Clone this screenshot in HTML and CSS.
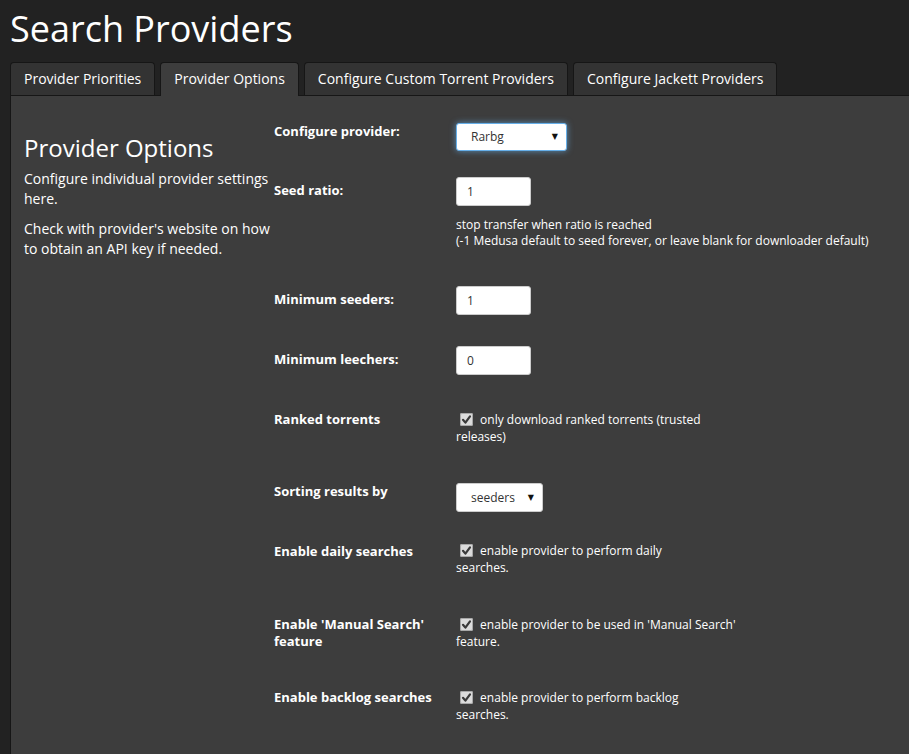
FILE: index.html
```html
<!DOCTYPE html>
<html>
<head>
<meta charset="utf-8">
<title>Search Providers</title>
<link rel="stylesheet" href="styles.css">
</head>
<body>
<div class="page">
  <h1 class="title">Search Providers</h1>
  <ul class="tabs">
    <li class="tab">Provider Priorities</li>
    <li class="tab active">Provider Options</li>
    <li class="tab">Configure Custom Torrent Providers</li>
    <li class="tab">Configure Jackett Providers</li>
  </ul>
  <div class="panel">
    <div class="group-desc">
      <h3>Provider Options</h3>
      <p>Configure individual provider settings here.</p>
      <p>Check with provider's website on how to obtain an API key if needed.</p>
    </div>
    <div class="group-list">
      <div class="field row-provider">
        <span class="label">Configure provider:</span>
        <div class="desc">
          <span class="select focus wide"><span class="select-text">Rarbg</span></span>
        </div>
      </div>
      <div class="field row-seed">
        <span class="label pad">Seed ratio:</span>
        <div class="desc">
          <span class="input">1</span>
          <div class="help">
            <span class="help-line">stop transfer when ratio is reached</span>
            <span class="help-line">(-1 Medusa default to seed forever, or leave blank for downloader default)</span>
          </div>
        </div>
      </div>
      <div class="field row-seeders">
        <span class="label pad">Minimum seeders:</span>
        <div class="desc"><span class="input">1</span></div>
      </div>
      <div class="field row-leechers">
        <span class="label pad">Minimum leechers:</span>
        <div class="desc"><span class="input">0</span></div>
      </div>
      <div class="field row-ranked">
        <span class="label">Ranked torrents</span>
        <div class="desc check-desc">
          <span class="checkbox"><svg viewBox="0 0 13 13" width="13" height="13"><path d="M3 6.8 L5.4 9.6 L10 3.4" fill="none" stroke="#3a3a3a" stroke-width="2.2" stroke-linecap="round" stroke-linejoin="round"/></svg></span>
          only download ranked torrents (trusted<br>releases)
        </div>
      </div>
      <div class="field row-sort">
        <span class="label">Sorting results by</span>
        <div class="desc">
          <span class="select narrow"><span class="select-text">seeders</span></span>
        </div>
      </div>
      <div class="field row-daily">
        <span class="label">Enable daily searches</span>
        <div class="desc check-desc">
          <span class="checkbox"><svg viewBox="0 0 13 13" width="13" height="13"><path d="M3 6.8 L5.4 9.6 L10 3.4" fill="none" stroke="#3a3a3a" stroke-width="2.2" stroke-linecap="round" stroke-linejoin="round"/></svg></span>
          enable provider to perform daily<br>searches.
        </div>
      </div>
      <div class="field row-manual">
        <span class="label">Enable 'Manual Search'<br>feature</span>
        <div class="desc check-desc">
          <span class="checkbox"><svg viewBox="0 0 13 13" width="13" height="13"><path d="M3 6.8 L5.4 9.6 L10 3.4" fill="none" stroke="#3a3a3a" stroke-width="2.2" stroke-linecap="round" stroke-linejoin="round"/></svg></span>
          enable provider to be used in 'Manual Search'<br>feature.
        </div>
      </div>
      <div class="field row-backlog">
        <span class="label">Enable backlog searches</span>
        <div class="desc check-desc">
          <span class="checkbox"><svg viewBox="0 0 13 13" width="13" height="13"><path d="M3 6.8 L5.4 9.6 L10 3.4" fill="none" stroke="#3a3a3a" stroke-width="2.2" stroke-linecap="round" stroke-linejoin="round"/></svg></span>
          enable provider to perform backlog<br>searches.
        </div>
      </div>
    </div>
  </div>
</div>
</body>
</html>
```

FILE: styles.css
```css
html, body {
  margin: 0;
  padding: 0;
  background: #222222;
  height: 100%;
  overflow: hidden;
}

body {
  font-family: "Open Sans", "DejaVu Sans", sans-serif;
  color: #ffffff;
}

.page {
  padding-left: 10px;
}

.title {
  margin: 0;
  padding-top: 8px;
  font-size: 36px;
  font-weight: 400;
  line-height: 42px;
  height: 54px;
  color: #ffffff;
}

.tabs {
  list-style: none;
  margin: 0;
  padding: 0;
  display: flex;
  gap: 5px;
  position: relative;
  z-index: 1;
}

.tab {
  height: 32px;
  line-height: 32px;
  padding: 0 13px;
  font-size: 14px;
  color: #ffffff;
  background: #333333;
  border: 1px solid #161616;
  border-bottom: none;
  border-radius: 4px 4px 0 0;
  white-space: nowrap;
}

.tab.active {
  background: #3d3d3d;
  height: 33px;
  margin-bottom: -1px;
}

.panel {
  background: #3d3d3d;
  border-top: 1px solid #161616;
  border-left: 1px solid #161616;
  min-height: 700px;
  display: flex;
  padding-left: 13px;
}

.group-desc {
  width: 250px;
  flex: none;
  padding-top: 37px;
  font-size: 14px;
  line-height: 20px;
}

.group-desc h3 {
  margin: 0 0 6px 0;
  font-size: 24px;
  font-weight: 400;
  line-height: 30px;
}

.group-desc p {
  margin: 0 0 10px 0;
}

.group-list {
  padding-top: 27px;
  display: flex;
  flex-direction: column;
}

.field {
  display: flex;
  align-items: flex-start;
}

.label {
  width: 182px;
  flex: none;
  font-size: 13px;
  font-weight: 700;
  line-height: 17px;
}

.label.pad {
  padding-top: 5px;
}

.desc {
  font-size: 12px;
  line-height: 17px;
}

.check-desc {
  margin-top: -0.5px;
}

.select {
  position: relative;
  display: block;
  height: 26px;
  line-height: 26px;
  background: #ffffff;
  border: 1px solid #cccccc;
  border-radius: 3px;
  color: #333333;
  font-size: 12px;
}

.select::after {
  content: "\25BC";
  position: absolute;
  right: 8px;
  top: 0;
  font-size: 8px;
  color: #111111;
  font-family: "DejaVu Sans", sans-serif;
}

.select.wide {
  width: 109px;
}

.select.wide .select-text {
  padding-left: 14px;
}

.select.narrow {
  width: 85px;
  height: 27px;
  line-height: 27px;
}

.select.narrow .select-text {
  padding-left: 14px;
}

.select.focus {
  border-color: #66afe9;
  box-shadow: 0 0 6px rgba(102, 175, 233, 0.7);
}

.input {
  display: block;
  width: 63px;
  height: 27px;
  line-height: 27px;
  padding-left: 10px;
  background: #ffffff;
  border: 1px solid #cccccc;
  border-radius: 3px;
  color: #333333;
  font-size: 12px;
}

.help {
  margin-top: 10.5px;
  font-size: 12px;
}

.help-line {
  display: block;
  height: 16px;
  line-height: 16px;
  white-space: nowrap;
}

.checkbox {
  display: inline-block;
  width: 13px;
  height: 13px;
  margin: 0 4px 0 4px;
  vertical-align: -2px;
  background: #dcdcdc;
  border: none;
  border-radius: 2px;
  box-shadow: inset 0 0 0 1px #a8a8a8;
}

.checkbox svg {
  display: block;
}

.row-seed { margin-top: 26px; }
.row-seeders { margin-top: 37.5px; }
.row-leechers { margin-top: 31px; }
.row-ranked { margin-top: 36px; }
.row-sort { margin-top: 38px; }
.row-daily { margin-top: 31px; }
.row-manual { margin-top: 40px; }
.row-backlog { margin-top: 39px; }
```
